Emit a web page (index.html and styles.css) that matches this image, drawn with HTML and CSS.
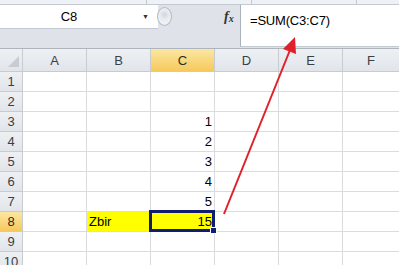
FILE: index.html
```html
<!DOCTYPE html>
<html lang="en">
<head>
    <meta charset="UTF-8">
    <title>Zbir - SUM</title>
    <link rel="stylesheet" href="styles.css">
</head>
<body>
    <div class="strip">
        <span class="seg seg-1"></span>
        <span class="seg seg-2"></span>
        <span class="seg seg-3"></span>
    </div>

    <!-- Name box and formula bar -->
    <div class="bar">
        <div class="bar-left">
            <div class="name-row">
                <div class="name-box">
                    <span class="name">C8</span>
                    <span class="drop">&#9660;</span>
                </div>
                <div class="splitter"></div>
                <div class="fx"><i>f</i><sub>x</sub></div>
            </div>
        </div>
        <div class="formula">=SUM(C3:C7)</div>
    </div>

    <!-- Sheet grid -->
    <div class="sheet">
        <div class="hd corner"><span class="tri"></span></div>
        <div class="hd col">A</div>
        <div class="hd col">B</div>
        <div class="hd col sel">C</div>
        <div class="hd col">D</div>
        <div class="hd col">E</div>
        <div class="hd col last">F</div>

        <div class="hd row">1</div><div class="c"></div><div class="c"></div><div class="c"></div><div class="c"></div><div class="c"></div><div class="c last"></div>
        <div class="hd row">2</div><div class="c"></div><div class="c"></div><div class="c"></div><div class="c"></div><div class="c"></div><div class="c last"></div>
        <div class="hd row">3</div><div class="c"></div><div class="c"></div><div class="c num">1</div><div class="c"></div><div class="c"></div><div class="c last"></div>
        <div class="hd row">4</div><div class="c"></div><div class="c"></div><div class="c num">2</div><div class="c"></div><div class="c"></div><div class="c last"></div>
        <div class="hd row">5</div><div class="c"></div><div class="c"></div><div class="c num">3</div><div class="c"></div><div class="c"></div><div class="c last"></div>
        <div class="hd row">6</div><div class="c"></div><div class="c"></div><div class="c num">4</div><div class="c"></div><div class="c"></div><div class="c last"></div>
        <div class="hd row">7</div><div class="c"></div><div class="c"></div><div class="c num">5</div><div class="c"></div><div class="c"></div><div class="c last"></div>
        <div class="hd row sel">8</div><div class="c"></div><div class="c yellow">Zbir</div><div class="c num yellow active">15<span class="handle"></span></div><div class="c"></div><div class="c"></div><div class="c last"></div>
        <div class="hd row">9</div><div class="c"></div><div class="c"></div><div class="c"></div><div class="c"></div><div class="c"></div><div class="c last"></div>
        <div class="hd row">10</div><div class="c"></div><div class="c"></div><div class="c"></div><div class="c"></div><div class="c"></div><div class="c last"></div>
    </div>

    <!-- Red arrow pointing from the cell to the formula -->
    <svg class="arrow" width="399" height="265" viewBox="0 0 399 265">
        <line x1="224" y1="214" x2="290" y2="50" stroke="#e0202a" stroke-width="2"/>
        <polygon points="295,37 283,49 296,54" fill="#e0202a"/>
    </svg>
</body>
</html>
```

FILE: styles.css
```css
/* Spreadsheet screenshot */
body {
    margin: 0;
    width: 399px;
    height: 265px;
    overflow: hidden;
    position: relative;
    background-color: #fff;
    font-family: "Liberation Sans", Arial, sans-serif;
    color: #000;
}

.strip {
    height: 4px;
    background-color: #eef1f5;
    border-bottom: 1px solid #c3c9d1;
    display: flex;
}

.seg {
    height: 4px;
    border-right: 1px solid #c3c9d1;
}

.seg-1 { width: 146px; }
.seg-2 { width: 104px; }
.seg-3 { width: 104px; }

.bar {
    display: flex;
    height: 43px;
    background-color: #dfe3e9;
}

.bar-left {
    width: 240px;
}

.name-row {
    display: flex;
    align-items: center;
    height: 23px;
}

.name-box {
    width: 158px;
    height: 23px;
    background-color: #fff;
    border-bottom: 1px solid #c3c9d1;
    display: flex;
    align-items: center;
}

.name {
    width: 138px;
    text-align: center;
    font-size: 13px;
}

.drop {
    font-size: 7px;
    color: #333;
    margin-left: 4px;
}

.splitter {
    width: 15px;
    height: 19px;
    margin-left: -1px;
    border: 1px solid #b4bbc5;
    border-radius: 50%;
    background: radial-gradient(circle at 50% 40%, #d2d6dc 0, #e9ecf0 40%, #f4f5f7 100%);
    box-sizing: border-box;
}

.fx {
    margin-left: 52px;
    font-family: "Liberation Serif", serif;
    font-weight: bold;
    font-size: 14px;
    color: #333;
}

.fx sub {
    font-size: 10px;
    font-style: italic;
    vertical-align: -1px;
}

.formula {
    flex: 1;
    height: 42px;
    background-color: #fff;
    border-left: 1px solid #aab2bd;
    border-bottom: 1px solid #c3c9d1;
    box-sizing: border-box;
    padding: 8px 0 0 9px;
    font-size: 13px;
    letter-spacing: -0.2px;
}

.sheet {
    display: grid;
    grid-template-columns: 23px repeat(5, 64px) 1fr;
    grid-template-rows: 23px;
    grid-auto-rows: 20px;
    border-top: 1px solid #aeb4bc;
}

.sheet > div {
    box-sizing: border-box;
    border-right: 1px solid #d9dbde;
    border-bottom: 1px solid #d9dbde;
    font-size: 13px;
    line-height: 20px;
}

.hd {
    background: linear-gradient(#eef0f3, #e1e5ea);
    color: #3a3f45;
    text-align: center;
}

.sheet > .hd {
    border-color: #c7ccd3;
}

.sheet > .hd.col {
    line-height: 24px;
}

.hd.sel {
    background: linear-gradient(#fbe7a2, #f6c95c);
    color: #2b2b2b;
}

.corner {
    position: relative;
}

.tri {
    position: absolute;
    right: 3px;
    bottom: 4px;
    width: 0;
    height: 0;
    border-left: 11px solid transparent;
    border-bottom: 11px solid #c8ccd2;
}

.sheet > .last {
    border-right: none;
}

.num {
    text-align: right;
    padding-right: 2px;
}

.yellow {
    background-color: #ffff00;
    padding-left: 2px;
}

.sheet > .yellow {
    border-right-color: #ffff00;
}

.active {
    position: relative;
}

.active::after {
    content: "";
    position: absolute;
    left: -2px;
    top: -2px;
    right: -1px;
    bottom: -1px;
    border: 3px solid #101d72;
}

.handle {
    position: absolute;
    right: -3px;
    bottom: -3px;
    width: 5px;
    height: 5px;
    background-color: #101d72;
    border: 1px solid #fff;
    z-index: 1;
}

.arrow {
    position: absolute;
    left: 0;
    top: 0;
}
```
